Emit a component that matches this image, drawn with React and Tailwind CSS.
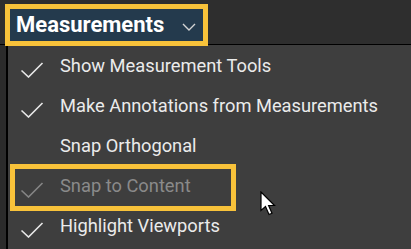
const items = [
  { label: 'Show Measurement Tools', checked: true },
  { label: 'Make Annotations from Measurements', checked: true },
  { label: 'Snap Orthogonal', checked: false },
  { label: 'Snap to Content', checked: true, disabled: true, focused: true },
  { label: 'Highlight Viewports', checked: true },
];

function Check({ dim }) {
  return (
    <svg width="24" height="16" viewBox="0 0 24 16" className="mt-[7px]">
      <path
        d="M1.5 8.5 L8.5 15 L22.5 1"
        fill="none"
        stroke={dim ? '#858585' : '#e8e8e8'}
        strokeWidth="1.6"
      />
    </svg>
  );
}

function Cursor() {
  return (
    <svg width="20" height="26" viewBox="0 0 20 26" className="absolute left-[252px] top-[25px]">
      <path
        d="M1 1 L1 19.5 L5.5 15.5 L9 23.5 L12 22.2 L8.6 14.5 L14.5 14.5 Z"
        fill="#ffffff"
        stroke="#000000"
        strokeWidth="1.2"
        strokeLinejoin="miter"
      />
    </svg>
  );
}

export default function App() {
  return (
    <div
      className="w-[411px] h-[249px] bg-[#2c2c2c] overflow-hidden flex flex-col"
      style={{ fontFamily: 'Roboto, "Liberation Sans", sans-serif' }}
    >
      {/* Toolbar */}
      <div className="h-[44px] shrink-0 pt-[4px] pl-[5px] bg-[#2e2e2e]">
        <button className="relative z-10 w-[203px] h-[42px] border-[5px] border-[#f8c23a] bg-[#243a4d] flex items-center pl-[6px]">
          <span className="text-[22px] font-bold text-white leading-[26px]">Measurements</span>
          <svg width="14" height="8" viewBox="0 0 14 8" className="ml-[18px] mt-[3px]">
            <path d="M1 1 L7 7 L13 1" fill="none" stroke="#d4d4d4" strokeWidth="1.4" />
          </svg>
        </button>
      </div>
      <div className="h-[1px] bg-black shrink-0" />

      {/* Menu */}
      <div className="flex flex-1">
        <div className="w-[6px] bg-[#2b2b2b]" />
        <div className="flex-1 bg-[#3e3e3e] border-l-2 border-black pt-[1px]">
          {items.map((it) => (
            <div key={it.label} className="relative h-[40px] flex items-center">
              {it.focused && (
                <div className="absolute left-[2px] -top-[2px] w-[226px] h-[47px] border-[5px] border-[#f8c23a]" />
              )}
              <div className="w-[52px] pl-[12px] flex">
                {it.checked && <Check dim={it.disabled} />}
              </div>
              <span
                className={`text-[18.3px] leading-[20px] whitespace-nowrap ${it.disabled ? 'text-[#8a8a8a]' : 'text-[#ebebeb]'}`}
              >
                {it.label}
              </span>
              {it.focused && <Cursor />}
            </div>
          ))}
        </div>
      </div>
    </div>
  );
}
